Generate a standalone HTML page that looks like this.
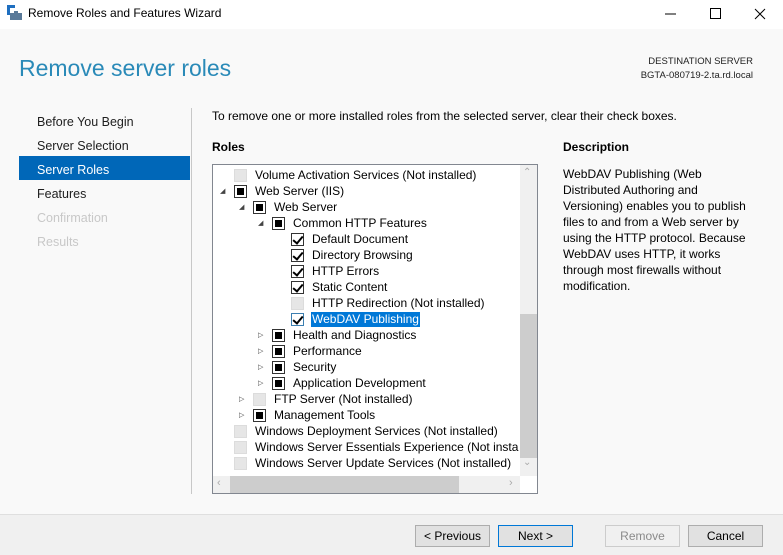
<!DOCTYPE html>
<html><head><meta charset="utf-8"><style>
*{margin:0;padding:0;box-sizing:border-box}
body{width:783px;height:555px;background:#f9f9f9;font-family:"Liberation Sans",sans-serif;font-size:12px;color:#000;position:relative;overflow:hidden}
.a{position:absolute;white-space:nowrap}
.tb{left:0;top:0;width:783px;height:29px;background:#fff}
.nav{left:37px;font-size:12.5px;color:#1e1e1e}
.cb{position:absolute;width:13px;height:13px;border:1px solid #333;background:#fff}
.cb.p::after{content:"";position:absolute;left:2px;top:2px;width:7px;height:7px;background:#000}
.cb.n{border-color:#dcdcdc;background:#e6e6e6}
.cb.c::after{content:"";position:absolute;left:3px;top:0px;width:4px;height:8px;border:solid #000;border-width:0 2px 2px 0;transform:rotate(40deg)}
.tx{position:absolute;font-size:12px}
.ar{position:absolute;font-size:7px;color:#444}
.btn{position:absolute;top:525px;width:75px;height:22px;border:1px solid #adadad;background:#e1e1e1;text-align:center;line-height:20px;font-size:12px}
</style></head><body>
<div class="a tb"></div>
<svg class="a" style="left:7px;top:5px" width="16" height="16"><rect x="0" y="0" width="3" height="10" fill="#1e6fc0"/><rect x="0" y="0" width="8" height="3" fill="#1e6fc0"/><rect x="3" y="8" width="12" height="7" fill="#5a7a99"/><rect x="7" y="6" width="4" height="2" fill="#5a7a99"/></svg>
<div class="a" style="left:28px;top:6px;font-size:12px">Remove Roles and Features Wizard</div>
<svg class="a" style="left:660px;top:6px" width="120" height="16"><line x1="5" y1="8" x2="16" y2="8" stroke="#000"/><rect x="50.5" y="2.5" width="10" height="10" fill="none" stroke="#000"/><path d="M95 3L105 13M105 3L95 13" stroke="#000"/></svg>
<div class="a" style="left:19px;top:55px;font-size:23px;color:#2a8ab8;font-weight:300">Remove server roles</div>
<div class="a" style="right:30px;top:55px;font-size:9.5px;text-align:right;line-height:14px;color:#222">DESTINATION SERVER<br>BGTA-080719-2.ta.rd.local</div>
<div class="a" style="left:19px;top:156px;width:171px;height:24px;background:#0067b8"></div>
<div class="a nav" style="top:115px">Before You Begin</div>
<div class="a nav" style="top:139px">Server Selection</div>
<div class="a nav" style="top:163px;color:#fff">Server Roles</div>
<div class="a nav" style="top:187px">Features</div>
<div class="a nav" style="top:211px;color:#c8c8c8">Confirmation</div>
<div class="a nav" style="top:235px;color:#c8c8c8">Results</div>
<div class="a" style="left:191px;top:108px;width:1px;height:386px;background:#c8c8c8"></div>
<div class="a" style="left:212px;top:109px">To remove one or more installed roles from the selected server, clear their check boxes.</div>
<div class="a" style="left:212px;top:140px;font-weight:bold">Roles</div>
<div class="a" style="left:563px;top:140px;font-weight:bold">Description</div>
<div class="a" style="left:563px;top:166px;line-height:16px">WebDAV Publishing (Web<br>Distributed Authoring and<br>Versioning) enables you to publish<br>files to and from a Web server by<br>using the HTTP protocol. Because<br>WebDAV uses HTTP, it works<br>through most firewalls without<br>modification.</div>
<div class="a" style="left:212px;top:164px;width:326px;height:330px;border:1px solid #828790;background:#fff;overflow:hidden">
<div style="position:absolute;left:307px;top:0;width:17px;height:311px;background:#f0f0f0"></div>
<div style="position:absolute;left:307px;top:149px;width:17px;height:144px;background:#cdcdcd"></div>
<div style="position:absolute;left:0;top:311px;width:307px;height:17px;background:#f0f0f0"></div>
<div style="position:absolute;left:17px;top:311px;width:229px;height:17px;background:#cdcdcd"></div>
<div style="position:absolute;left:310px;top:2px;font-size:10px;color:#aaa">&#8963;</div>
<div style="position:absolute;left:310px;top:292px;font-size:10px;color:#aaa">&#8964;</div>
<div style="position:absolute;left:4px;top:312px;font-size:11px;color:#aaa">&lsaquo;</div>
<div style="position:absolute;left:296px;top:312px;font-size:11px;color:#aaa">&rsaquo;</div>
</div>
<div class="a" style="left:0;top:1px">
<div class="cb n" style="left:234px;top:168px"></div><div class="tx" style="left:255px;top:167px">Volume Activation Services (Not installed)</div>
<div class="ar" style="left:220px;top:186px">&#9698;</div><div class="cb p" style="left:234px;top:184px"></div><div class="tx" style="left:255px;top:183px">Web Server (IIS)</div>
<div class="ar" style="left:239px;top:202px">&#9698;</div><div class="cb p" style="left:253px;top:200px"></div><div class="tx" style="left:274px;top:199px">Web Server</div>
<div class="ar" style="left:258px;top:218px">&#9698;</div><div class="cb p" style="left:272px;top:216px"></div><div class="tx" style="left:293px;top:215px">Common HTTP Features</div>
<div class="cb c" style="left:291px;top:232px"></div><div class="tx" style="left:312px;top:231px">Default Document</div>
<div class="cb c" style="left:291px;top:248px"></div><div class="tx" style="left:312px;top:247px">Directory Browsing</div>
<div class="cb c" style="left:291px;top:264px"></div><div class="tx" style="left:312px;top:263px">HTTP Errors</div>
<div class="cb c" style="left:291px;top:280px"></div><div class="tx" style="left:312px;top:279px">Static Content</div>
<div class="cb n" style="left:291px;top:296px"></div><div class="tx" style="left:312px;top:295px">HTTP Redirection (Not installed)</div>
<div class="cb c" style="left:291px;top:312px;border-color:#3c7fb1"></div><div class="tx" style="left:311px;top:311px;background:#0078d7;color:#fff;padding:0 1px;height:15px">WebDAV Publishing</div>
<div class="ar" style="left:258px;top:330px">&#9655;</div><div class="cb p" style="left:272px;top:328px"></div><div class="tx" style="left:293px;top:327px">Health and Diagnostics</div>
<div class="ar" style="left:258px;top:346px">&#9655;</div><div class="cb p" style="left:272px;top:344px"></div><div class="tx" style="left:293px;top:343px">Performance</div>
<div class="ar" style="left:258px;top:362px">&#9655;</div><div class="cb p" style="left:272px;top:360px"></div><div class="tx" style="left:293px;top:359px">Security</div>
<div class="ar" style="left:258px;top:378px">&#9655;</div><div class="cb p" style="left:272px;top:376px"></div><div class="tx" style="left:293px;top:375px">Application Development</div>
<div class="ar" style="left:239px;top:394px">&#9655;</div><div class="cb n" style="left:253px;top:392px"></div><div class="tx" style="left:274px;top:391px">FTP Server (Not installed)</div>
<div class="ar" style="left:239px;top:410px">&#9655;</div><div class="cb p" style="left:253px;top:408px"></div><div class="tx" style="left:274px;top:407px">Management Tools</div>
<div class="cb n" style="left:234px;top:424px"></div><div class="tx" style="left:255px;top:423px">Windows Deployment Services (Not installed)</div>
<div class="cb n" style="left:234px;top:440px"></div><div class="tx" style="left:255px;top:439px;width:264px;overflow:hidden">Windows Server Essentials Experience (Not installed)</div>
<div class="cb n" style="left:234px;top:456px"></div><div class="tx" style="left:255px;top:455px">Windows Server Update Services (Not installed)</div>
</div>
<div class="a" style="left:0;top:514px;width:783px;height:41px;background:#f0f0f0;border-top:1px solid #dfdfdf"></div>
<div class="btn" style="left:415px;border-color:#adadad">&lt; Previous</div>
<div class="btn" style="left:498px;border-color:#0078d7">Next &gt;</div>
<div class="btn" style="left:605px;border-color:#ccc;background:#f0f0f0;color:#8a8a8a">Remove</div>
<div class="btn" style="left:688px">Cancel</div>
</body></html>
